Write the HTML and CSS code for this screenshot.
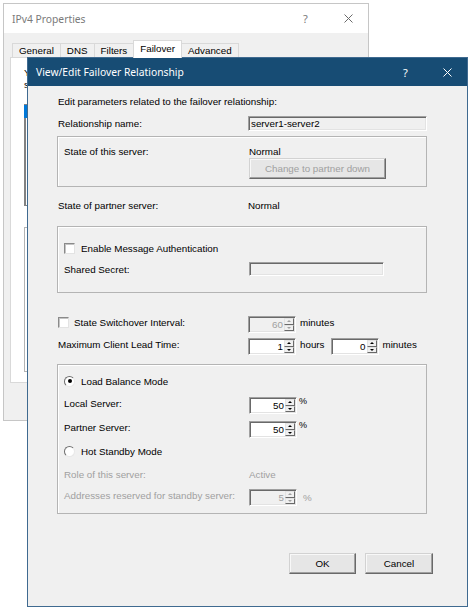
FILE: index.html
```html
<!DOCTYPE html>
<html><head><meta charset="UTF-8">
<meta name="viewport" content="width=device-width, initial-scale=1.0">
<title>View/Edit Failover Relationship</title>
<link rel="stylesheet" href="styles.css">
</head>
<body>
    <!-- parent property sheet, sits behind the dialog -->
    <div class="props-window">
        <div class="props-title">
            <span class="props-caption">IPv4 Properties</span>
            <span class="props-help">?</span>
            <span class="props-close">
                <svg width="9" height="9" viewBox="0 0 9 9"><path d="M0.5 0.5L8.5 8.5M8.5 0.5L0.5 8.5" stroke="currentColor" stroke-width="1"/></svg>
            </span>
        </div>
        <div class="props-body">
            <div class="tabs">
                <span class="tab">General</span>
                <span class="tab">DNS</span>
                <span class="tab">Filters</span>
                <span class="tab tab-active">Failover</span>
                <span class="tab">Advanced</span>
            </div>
            <div class="tab-panel">
                <div class="panel-text">
                    <div>Y</div>
                    <div>s</div>
                </div>
                <div class="list-box"><div class="list-item"></div></div>
                <div class="detail-box"></div>
            </div>
        </div>
    </div>

    <div class="dialog">
        <div class="dialog-title">
            <span class="dialog-caption">View/Edit Failover Relationship</span>
            <span class="title-help">?</span>
            <span class="title-close">
                <svg width="9" height="9" viewBox="0 0 9 9"><path d="M0.5 0.5L8.5 8.5M8.5 0.5L0.5 8.5" stroke="currentColor" stroke-width="1"/></svg>
            </span>
        </div>

        <div class="dialog-body">
            <div class="row intro">Edit parameters related to the failover relationship:</div>

            <div class="row row-name">
                <span class="label">Relationship name:</span>
                <span class="textbox name-box">server1-server2</span>
            </div>

            <div class="group group-state">
                <div class="row">
                    <span class="label">State of this server:</span>
                    <span>Normal</span>
                </div>
                <div class="row">
                    <span class="label"></span>
                    <button class="btn partner-down" disabled>Change to partner down</button>
                </div>
            </div>

            <div class="row row-partner">
                <span class="label">State of partner server:</span>
                <span>Normal</span>
            </div>

            <div class="group group-auth">
                <div class="row">
                    <span class="check"></span>
                    <span>Enable Message Authentication</span>
                </div>
                <div class="row row-secret">
                    <span class="label">Shared Secret:</span>
                    <span class="textbox secret-box"></span>
                </div>
            </div>

            <div class="row spin-row row-switchover">
                <span class="label"><span class="check"></span>State Switchover Interval:</span>
                <span class="spin spin-disabled">
                    <span class="spin-value">60</span>
                    <span class="spin-arrows"><span class="spin-up"></span><span class="spin-down"></span></span>
                </span>
                <span class="unit">minutes</span>
            </div>

            <div class="row spin-row row-lead">
                <span class="label">Maximum Client Lead Time:</span>
                <span class="spin">
                    <span class="spin-value">1</span>
                    <span class="spin-arrows"><span class="spin-up"></span><span class="spin-down"></span></span>
                </span>
                <span class="unit">hours</span>
                <span class="spin">
                    <span class="spin-value">0</span>
                    <span class="spin-arrows"><span class="spin-up"></span><span class="spin-down"></span></span>
                </span>
                <span class="unit">minutes</span>
            </div>

            <div class="group group-mode">
                <div class="row">
                    <span class="radio radio-on"></span>
                    <span>Load Balance Mode</span>
                </div>
                <div class="row spin-row row-local">
                    <span class="label">Local Server:</span>
                    <span class="spin">
                        <span class="spin-value">50</span>
                        <span class="spin-arrows"><span class="spin-up"></span><span class="spin-down"></span></span>
                    </span>
                    <span class="percent">%</span>
                </div>
                <div class="row spin-row row-partner-pct">
                    <span class="label">Partner Server:</span>
                    <span class="spin">
                        <span class="spin-value">50</span>
                        <span class="spin-arrows"><span class="spin-up"></span><span class="spin-down"></span></span>
                    </span>
                    <span class="percent">%</span>
                </div>
                <div class="row row-standby">
                    <span class="radio"></span>
                    <span>Hot Standby Mode</span>
                </div>
                <div class="row row-role muted">
                    <span class="label">Role of this server:</span>
                    <span>Active</span>
                </div>
                <div class="row spin-row row-reserved muted">
                    <span class="label">Addresses reserved for standby server:</span>
                    <span class="spin spin-disabled">
                        <span class="spin-value">5</span>
                        <span class="spin-arrows"><span class="spin-up"></span><span class="spin-down"></span></span>
                    </span>
                    <span class="unit unit-pct">%</span>
                </div>
            </div>

            <div class="actions">
                <button class="btn btn-ok">OK</button>
                <button class="btn btn-cancel">Cancel</button>
            </div>
        </div>
    </div>
</body>
</html>
```

FILE: styles.css
```css
:root {
    --face-color: #f0f0f0;
    --title-color: #174c74;
    --muted-color: #a0a0a0;
    --shade-dark: #696969;
    --shade-mid: #a0a0a0;
    --shade-light: #e3e3e3;
}

* {
    box-sizing: border-box;
}

body {
    margin: 0;
    width: 474px;
    height: 611px;
    position: relative;
    overflow: hidden;
    background-color: #ffffff;
    font-family: 'Liberation Sans', Arial, sans-serif;
    font-size: 9.8px;
    color: #000000;
}

/* ---------- parent window ---------- */

.props-window {
    position: absolute;
    left: 3px;
    top: 3px;
    width: 366px;
    height: 418px;
    border: 1px solid #c6c6c6;
    background-color: var(--face-color);
}

.props-title {
    height: 29px;
    background-color: #ffffff;
    display: flex;
    align-items: center;
    padding-left: 8px;
    font-family: 'Noto Sans', sans-serif;
    font-size: 10.3px;
    color: #7a7a7a;
}

.props-help {
    margin-left: auto;
    margin-right: 4px;
    width: 39px;
    text-align: center;
    font-size: 11px;
}

.props-close {
    width: 39px;
    display: flex;
    justify-content: center;
    color: #6a6a6a;
}

.props-body {
    padding: 10px 6px 0 6px;
}

.tabs {
    display: flex;
    align-items: flex-end;
    margin-left: 3px;
    height: 14px;
}

.tab {
    height: 14px;
    line-height: 13px;
    padding: 0 6px;
    border: 1px solid #d9d9d9;
    border-bottom: none;
    margin-left: -1px;
    background-color: var(--face-color);
}

.tab-active {
    height: 18px;
    margin-bottom: -1px;
    line-height: 15px;
    background-color: #ffffff;
    position: relative;
    z-index: 1;
}

.tab-panel {
    height: 326px;
    background-color: #ffffff;
    border: 1px solid #d9d9d9;
    padding: 9px 0 0 13px;
}

.panel-text div {
    line-height: 12px;
}

.list-box {
    margin-top: 13px;
    height: 102px;
    border: 1px solid #828282;
    border-left-width: 2px;
}

.list-item {
    height: 13px;
    margin-left: -2px;
    background-color: #0078d7;
}

.detail-box {
    margin-top: 21px;
    height: 145px;
    border: 1px solid #b4b4b4;
}

/* ---------- failover dialog ---------- */

.dialog {
    position: absolute;
    left: 27px;
    top: 57px;
    width: 441px;
    height: 550px;
    border: 1px solid #3f6a90;
    background-color: var(--face-color);
}

.dialog-title {
    height: 28px;
    background-color: var(--title-color);
    color: #ffffff;
    display: flex;
    align-items: center;
    padding-left: 8px;
    font-family: 'Noto Sans', sans-serif;
    font-size: 10.3px;
}

.title-help {
    margin-left: auto;
    margin-right: 3px;
    width: 39px;
    text-align: center;
    font-size: 11px;
}

.title-close {
    width: 39px;
    display: flex;
    justify-content: center;
}

.dialog-body {
    padding: 8px 40px 0 30px;
}

.row {
    display: flex;
    align-items: center;
    height: 14px;
    white-space: nowrap;
}

.label {
    width: 190px;
    flex: none;
    display: flex;
    align-items: center;
}

.group .label {
    width: 185px;
}

.row-name {
    margin-top: 7px;
    height: 16px;
}

.row-partner {
    margin-top: 11px;
}

.group {
    margin-left: -1px;
    border: 1px solid #b4b4b4;
    box-shadow: inset 1px 1px 0 #ffffff;
    padding-left: 6px;
}

.group-state {
    margin-top: 5px;
    padding-top: 7px;
    padding-bottom: 7px;
}

.group-state .row + .row {
    height: 21px;
}

.group-auth {
    margin-top: 14px;
    padding-top: 14px;
    padding-bottom: 16px;
}

.row-secret {
    margin-top: 7px;
}

.group-mode {
    margin-top: 9px;
    padding-top: 9px;
    padding-bottom: 7px;
}

.spin-row {
    height: 17px;
}

.spin-row .label {
    margin-bottom: 4px;
}

.row-switchover {
    margin-top: 23px;
}

.row-lead {
    margin-top: 5px;
}

.row-local {
    margin-top: 9px;
}

.row-partner-pct {
    margin-top: 7px;
}

.row-standby {
    margin-top: 6px;
}

.row-role {
    margin-top: 9px;
}

.row-reserved {
    margin-top: 8px;
}

.muted {
    color: var(--muted-color);
}

/* sunken edit boxes */
.textbox {
    height: 15px;
    line-height: 13px;
    padding-left: 2px;
    background-color: var(--face-color);
    border: 1px solid;
    border-color: var(--shade-mid) #ffffff #ffffff var(--shade-mid);
    box-shadow: inset 1px 1px 0 var(--shade-dark), inset -1px -1px 0 var(--shade-light);
}

.name-box {
    width: 179px;
}

.secret-box {
    width: 135px;
    height: 14px;
}

.check {
    width: 11px;
    height: 11px;
    flex: none;
    margin-right: 5px;
    background-color: #ffffff;
    border: 1px solid;
    border-color: #8a8a8a #e3e3e3 #e3e3e3 #8a8a8a;
    box-shadow: inset 1px 1px 0 #c4c4c4;
}

.group .check {
    margin-right: 6px;
}

.radio {
    width: 11px;
    height: 11px;
    flex: none;
    margin-right: 6px;
    border-radius: 50%;
    background-color: #ffffff;
    border: 1px solid;
    border-color: #6e6e6e #e8e8e8 #e8e8e8 #6e6e6e;
    display: flex;
    align-items: center;
    justify-content: center;
}

.radio-on::after {
    content: "";
    width: 4px;
    height: 4px;
    border-radius: 50%;
    background-color: #000000;
}

/* up/down number fields */
.spin {
    display: flex;
    width: 48px;
    height: 17px;
    flex: none;
    background-color: #ffffff;
    border: 1px solid;
    border-color: var(--shade-mid) #ffffff #ffffff var(--shade-mid);
    box-shadow: inset 1px 1px 0 var(--shade-dark), inset -1px -1px 0 var(--shade-light);
}

.spin-value {
    flex: 1;
    text-align: right;
    padding-right: 1px;
    line-height: 15px;
}

.spin-arrows {
    width: 11px;
    display: flex;
    flex-direction: column;
    padding: 1px 1px 1px 0;
}

.spin-arrows span {
    flex: 1;
    background-color: var(--face-color);
    border: 1px solid;
    border-color: var(--shade-light) var(--shade-dark) var(--shade-dark) var(--shade-light);
    display: flex;
    align-items: center;
    justify-content: center;
}

.spin-up::before {
    content: "";
    border-left: 2px solid transparent;
    border-right: 2px solid transparent;
    border-bottom: 2px solid #000000;
}

.spin-down::before {
    content: "";
    border-left: 2px solid transparent;
    border-right: 2px solid transparent;
    border-top: 2px solid #000000;
}

.spin-disabled {
    background-color: var(--face-color);
    color: var(--muted-color);
}

.spin-disabled .spin-up::before {
    border-bottom-color: var(--muted-color);
}

.spin-disabled .spin-down::before {
    border-top-color: var(--muted-color);
}

.unit {
    margin-left: 4px;
    margin-bottom: 4px;
}

.unit + .spin {
    margin-left: 6px;
}

.unit-pct {
    margin-left: 6px;
    margin-bottom: 0;
}

.percent {
    align-self: flex-start;
    margin-left: 2px;
    font-size: 9px;
    line-height: 9px;
}

/* raised push buttons */
.btn {
    height: 21px;
    padding: 0;
    font-family: 'Liberation Sans', Arial, sans-serif;
    font-size: 9.8px;
    color: #000000;
    background-color: #e6e6e6;
    border: 1px solid;
    border-color: #d2d2d2 var(--shade-dark) var(--shade-dark) #d2d2d2;
    box-shadow: inset -1px -1px 0 var(--shade-mid), inset 1px 1px 0 #f8f8f8;
}

.partner-down {
    width: 137px;
    color: var(--muted-color);
}

.actions {
    display: flex;
    justify-content: flex-end;
    gap: 9px;
    margin-top: 39px;
    margin-right: -6px;
}

.btn-ok {
    width: 67px;
}

.btn-cancel {
    width: 68px;
}
```
